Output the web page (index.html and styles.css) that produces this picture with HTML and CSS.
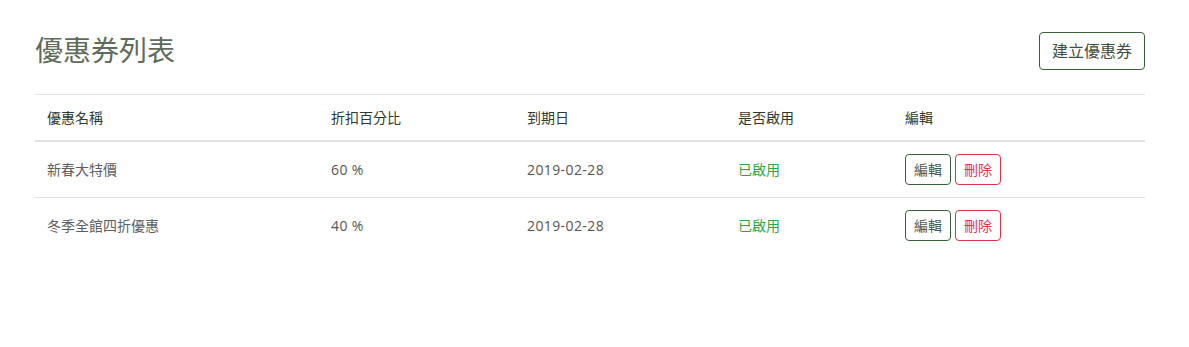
FILE: index.html
```html
<!DOCTYPE html>
<html lang="zh-Hant">
<head>
<meta charset="utf-8">
<title>優惠券列表</title>
<link rel="stylesheet" href="styles.css">
</head>
<body>
<div class="container">
  <div class="page-head">
    <h1 class="title">優惠券列表</h1>
    <button class="btn btn-create">建立優惠券</button>
  </div>
  <table class="table">
    <thead>
      <tr>
        <th class="c1">優惠名稱</th>
        <th class="c2">折扣百分比</th>
        <th class="c3">到期日</th>
        <th class="c4">是否啟用</th>
        <th class="c5">編輯</th>
      </tr>
    </thead>
    <tbody>
      <tr>
        <td>新春大特價</td>
        <td class="num">60 %</td>
        <td class="num">2019-02-28</td>
        <td class="status">已啟用</td>
        <td><div class="actions"><button class="btn btn-sm btn-edit">編輯</button><button class="btn btn-sm btn-del">刪除</button></div></td>
      </tr>
      <tr>
        <td>冬季全館四折優惠</td>
        <td class="num">40 %</td>
        <td class="num">2019-02-28</td>
        <td class="status">已啟用</td>
        <td><div class="actions"><button class="btn btn-sm btn-edit">編輯</button><button class="btn btn-sm btn-del">刪除</button></div></td>
      </tr>
    </tbody>
  </table>
</div>
</body>
</html>
```
FILE: styles.css
```css
* { box-sizing: border-box; }
body {
  margin: 0;
  background: #fff;
  font-family: "Open Sans", "Noto Sans CJK TC", sans-serif;
  color: #5b5b5b;
}
.container {
  width: 1110px;
  margin-left: 35px;
}
.page-head {
  display: flex;
  justify-content: space-between;
  align-items: flex-start;
  padding-top: 32px;
  height: 94px;
}
.title {
  margin: 0;
  margin-top: -2px;
  font-size: 28px;
  font-weight: 400;
  line-height: 40px;
  color: #5f6b5b;
}
.btn {
  font-family: inherit;
  background: #fff;
  border: 1px solid #3d5e3d;
  border-radius: 4px;
  cursor: pointer;
}
.btn-create {
  height: 38px;
  width: 106px;
  padding: 0 12px;
  font-size: 16px;
  line-height: 24px;
  color: #3f4f3f;
}
.table {
  width: 1110px;
  border-collapse: collapse;
  font-size: 14px;
  line-height: 21px;
}
.table th, .table td {
  padding: 12px;
  text-align: left;
  vertical-align: middle;
  border-top: 1px solid #dee2e6;
}
.table th {
  font-weight: 400;
  color: #2f3a2f;
  border-bottom: 2px solid #dee2e6;
  height: 46px;
}
.table td { height: 56px; color: #5f5f5f; }
.c1 { width: 284px; }
.c2 { width: 196px; }
.c3 { width: 211px; }
.c4 { width: 167px; }
.c5 { width: 252px; }
.table td.num { color: #555; letter-spacing: 0.4px; }
.table td.status { color: #28a745; }
.actions { display: flex; gap: 4px; }
.btn-sm {
  width: 46px;
  height: 31px;
  padding: 0 8px;
  font-size: 14px;
  line-height: 21px;
}
.btn-edit { border-color: #3d5e3d; color: #4d5a4d; }
.btn-del { border-color: #dc3545; color: #dc3545; }
```
